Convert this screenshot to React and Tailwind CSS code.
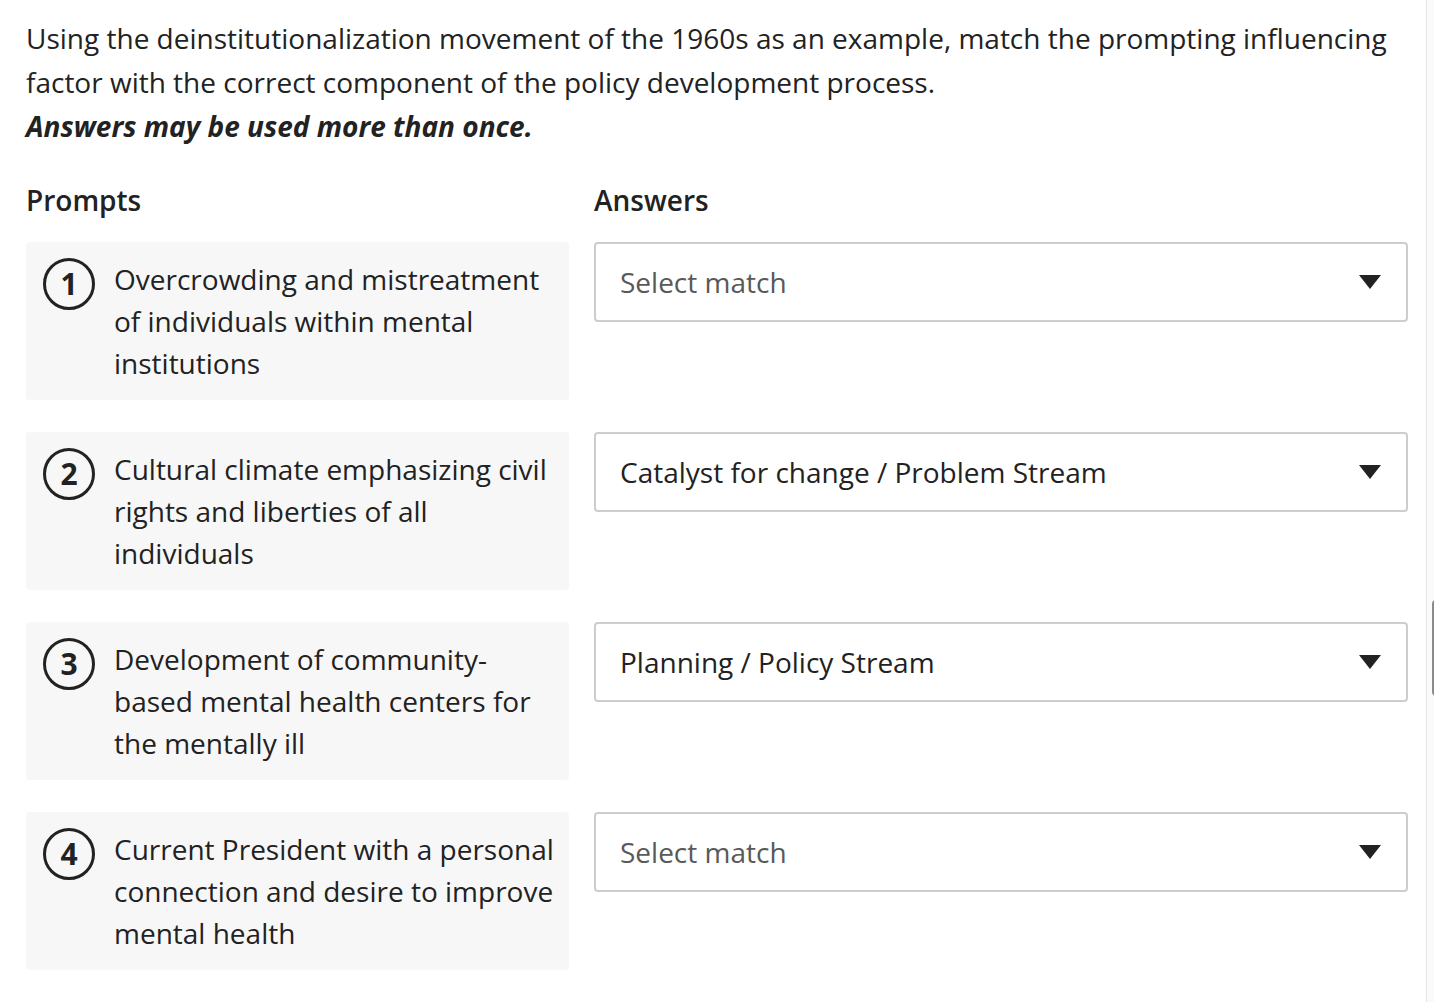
import React, { useState } from "react";

const prompts = [
  {
    n: 1,
    text: "Overcrowding and mistreatment of individuals within mental institutions",
    answer: "",
  },
  {
    n: 2,
    text: "Cultural climate emphasizing civil rights and liberties of all individuals",
    answer: "Catalyst for change / Problem Stream",
  },
  {
    n: 3,
    text: "Development of community-based mental health centers for the mentally ill",
    answer: "Planning / Policy Stream",
  },
  {
    n: 4,
    text: "Current President with a personal connection and desire to improve mental health",
    answer: "",
  },
];

function MatchSelect({ value }) {
  return (
    <div className="flex items-center justify-between h-[80px] border-2 border-[#cdcdcd] rounded-[4px] bg-white pl-[24px] pr-[25px]">
      <span
        className={`text-[28px] ${value ? "text-[#222222]" : "text-[#595959]"}`}
      >
        {value || "Select match"}
      </span>
      <svg width="22" height="14" viewBox="0 0 22 14">
        <polygon points="0,0 22,0 11,14" fill="#222222" />
      </svg>
    </div>
  );
}

export default function App() {
  const [rows] = useState(prompts);

  return (
    <div
      className="flex min-h-[1002px] bg-white text-[#222222]"
      style={{ fontFamily: '"Open Sans", "Noto Sans", sans-serif' }}
    >
      <div className="w-[1426px] pl-[26px] pr-[18px] pt-[16px]">
        {/* QUESTION */}
        <p className="text-[28px] leading-[44px]">
          Using the deinstitutionalization movement of the 1960s as an example,
          match the prompting influencing factor with the correct component of
          the policy development process.
        </p>
        <p className="text-[28px] leading-[44px] font-bold italic">
          Answers may be used more than once.
        </p>

        {/* HEADERS */}
        <div className="grid grid-cols-[543px_1fr] gap-x-[25px] mt-[30px]">
          <h3 className="text-[28px] font-semibold leading-[44px]">Prompts</h3>
          <h3 className="text-[28px] font-semibold leading-[44px]">Answers</h3>
        </div>

        {/* ROWS */}
        <div className="flex flex-col gap-[32px] mt-[20px]">
          {rows.map((r) => (
            <div key={r.n} className="grid grid-cols-[543px_1fr] gap-x-[25px]">
              <div className="flex gap-[19px] bg-[#f7f7f7] rounded-[4px] pl-[17px] pr-[14px] pt-[16px] pb-[16px]">
                <div className="w-[52px] h-[52px] shrink-0 rounded-full border-[3px] border-[#222222] flex items-center justify-center text-[30px] font-bold leading-none">
                  {r.n}
                </div>
                <p className="text-[28px] leading-[42px]">{r.text}</p>
              </div>
              <div>
                <MatchSelect value={r.answer} />
              </div>
            </div>
          ))}
        </div>
      </div>

      {/* SCROLLBAR STRIP */}
      <div className="w-[8px] border-l border-[#e6e6e6] bg-[#fafafa] pt-[600px] pl-[5px]">
        <div className="w-[4px] h-[96px] rounded-l-full bg-[#8a8a8a]" />
      </div>
    </div>
  );
}
